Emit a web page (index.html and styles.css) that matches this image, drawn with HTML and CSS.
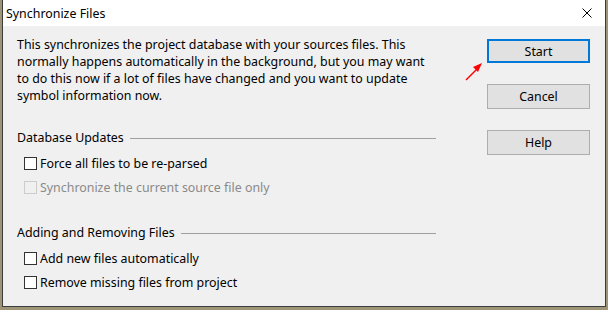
FILE: index.html
```html
<!DOCTYPE html>
<html lang="en">
  <head>
    <meta charset="UTF-8" />
    <title>Synchronize Files</title>
    <link rel="stylesheet" href="styles.css">
  </head>
  <body>
    <div class="window">
      <div class="titlebar">
        <span class="title">Synchronize Files</span>
        <svg class="close" width="10" height="10" viewBox="0 0 10 10">
          <path d="M0.5 0.5 L9.5 9.5 M9.5 0.5 L0.5 9.5" stroke="#000" stroke-width="1" />
        </svg>
      </div>
      <div class="client">
        <div class="main">
          <p class="intro">
            This synchronizes the project database with your sources files. This<br>
            normally happens automatically in the background, but you may want<br>
            to do this now if a lot of files have changed and you want to update<br>
            symbol information now.
          </p>
          <div class="group first">
            <div class="group-head"><span>Database Updates</span><i></i></div>
            <label class="check"><span class="box"></span>Force all files to be re-parsed</label>
            <label class="check disabled"><span class="box"></span>Synchronize the current source file only</label>
          </div>
          <div class="group">
            <div class="group-head"><span>Adding and Removing Files</span><i></i></div>
            <label class="check"><span class="box"></span>Add new files automatically</label>
            <label class="check"><span class="box"></span>Remove missing files from project</label>
          </div>
        </div>
        <div class="side">
          <div class="btn-wrap">
            <svg class="arrow" width="20" height="20" viewBox="0 0 20 20">
              <path d="M2 19 L14 7" stroke="#ff0000" stroke-width="1.5" />
              <path d="M18 2 L9 6 L14 11 Z" fill="#ff0000" />
            </svg>
            <button class="btn default">Start</button>
          </div>
          <button class="btn">Cancel</button>
          <button class="btn">Help</button>
        </div>
      </div>
    </div>
  </body>
</html>
```

FILE: styles.css
```css
* {
  margin: 0;
  padding: 0;
  box-sizing: border-box;
}
body {
  background-color: #9d9576;
  font-family: "Noto Sans", "Noto Sans CJK SC", sans-serif;
  font-size: 12.4px;
  color: #000;
}
.window {
  width: 604px;
  height: 307px;
  margin-left: 2px;
  border-left: 1px solid #3c3c3c;
  border-right: 1px solid #3c3c3c;
  border-bottom: 1px solid #3c3c3c;
  background-color: #f0f0f0;
  display: flex;
  flex-direction: column;
}
.titlebar {
  height: 26px;
  background-color: #fff;
  display: flex;
  align-items: center;
  justify-content: space-between;
  padding: 0 13px 0 3px;
}
.close {
  display: block;
}
.client {
  display: flex;
  padding: 10px 0 0 14px;
}
.main {
  width: 419px;
}
.intro {
  line-height: 17px;
}
.group {
  margin-top: 25px;
}
.group-head {
  display: flex;
  align-items: center;
  line-height: 17px;
  margin-bottom: 5px;
}
.group-head i {
  flex: 1;
  height: 1px;
  margin-left: 6px;
  margin-top: 1px;
  background-color: #a0a0a0;
}
.check {
  display: flex;
  align-items: center;
  height: 24px;
  padding-left: 7px;
}
.box {
  width: 13px;
  height: 13px;
  border: 1px solid #333;
  background-color: #fff;
  margin-right: 3px;
}
.check.disabled {
  color: #8a8a8a;
}
.check.disabled .box {
  border-color: #cccccc;
  background-color: #f0f0f0;
}
.side {
  margin-left: 51px;
  padding-top: 3px;
  display: flex;
  flex-direction: column;
}
.btn-wrap {
  position: relative;
}
.arrow {
  position: absolute;
  left: -23px;
  top: 22px;
}
.btn {
  width: 103px;
  height: 25px;
  margin-bottom: 21px;
  background-color: #e1e1e1;
  border: 1px solid #adadad;
  font-family: "Noto Sans", "Noto Sans CJK SC", sans-serif;
  font-size: 12.4px;
  color: #000;
}
.btn.default {
  height: 24px;
  border: 2px solid #0078d7;
}
```
